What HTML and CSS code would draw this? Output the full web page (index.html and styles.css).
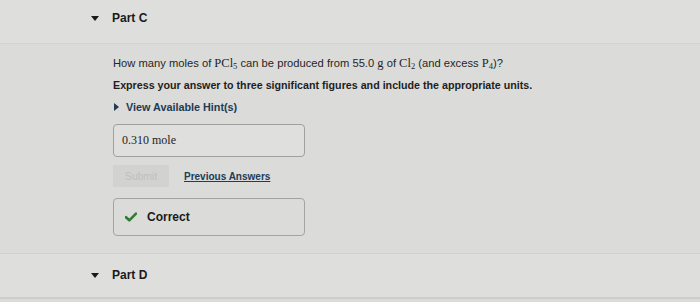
FILE: index.html
```html
<!DOCTYPE html>
<html>
<head>
<meta charset="utf-8">
<link rel="stylesheet" href="styles.css">
</head>
<body>
<div class="page">
  <div class="part-head">
    <span class="caret"></span>
    <span class="part-title">Part C</span>
  </div>
  <div class="part-body">
    <p class="question">How many moles of <span class="m">PCl<sub>5</sub></span> can be produced from 55.0 <span class="m">g</span> of <span class="m">Cl<sub>2</sub></span> (and excess <span class="m">P<sub>4</sub></span>)?</p>
    <p class="instr">Express your answer to three significant figures and include the appropriate units.</p>
    <div class="hint"><span class="hint-caret"></span><span>View Available Hint(s)</span></div>
    <div class="answer"><span class="m">0.310 mole</span></div>
    <div class="actions">
      <span class="submit">Submit</span>
      <a class="prev">Previous Answers</a>
    </div>
    <div class="correct">
      <svg class="check" width="12" height="10" viewBox="0 0 12 10"><path d="M1 5.2 L4.3 8.3 L11 1.6" fill="none" stroke="#2f7d32" stroke-width="2.6" stroke-linecap="round" stroke-linejoin="round"/></svg>
      <span>Correct</span>
    </div>
  </div>
  <div class="part-head part-d">
    <span class="caret"></span>
    <span class="part-title">Part D</span>
  </div>
</div>
</body>
</html>
```

FILE: styles.css
```css
html, body {
  margin: 0;
  padding: 0;
  background: #dbdbd9;
}
body {
  font-family: "Liberation Sans", Arial, sans-serif;
  color: #1e1e1e;
  width: 700px;
  height: 302px;
  overflow: hidden;
}
.page {
  display: flex;
  flex-direction: column;
}
.part-head {
  height: 44px;
  box-sizing: border-box;
  display: flex;
  align-items: flex-start;
  padding: 11px 0 0 91px;
  border-bottom: 1px solid #d2d2d0;
  background: #dededc;
}
.caret {
  width: 0;
  height: 0;
  border-left: 4.5px solid transparent;
  border-right: 4.5px solid transparent;
  border-top: 5px solid #1a1a1a;
  margin-right: 13px;
  margin-top: 5px;
}
.part-title {
  font-weight: bold;
  font-size: 12px;
  line-height: 14px;
  color: #1a1a1a;
}
.part-body {
  padding: 10px 0 0 113px;
  height: 209px;
  box-sizing: border-box;
}
.m {
  font-family: "Liberation Serif", "Times New Roman", serif;
  font-size: 12.5px;
}
.m sub {
  font-size: 8.5px;
  vertical-align: -2px;
  line-height: 0;
}
.question {
  margin: 0;
  font-size: 11.2px;
  line-height: 18px;
  color: #262626;
}
.instr {
  margin: 6px 0 0;
  font-size: 10.7px;
  font-weight: bold;
  line-height: 14px;
  color: #1e1e1e;
}
.hint {
  margin-top: 8px;
  display: flex;
  align-items: center;
  font-size: 10.8px;
  font-weight: bold;
  color: #223a52;
  height: 14px;
}
.hint-caret {
  width: 0;
  height: 0;
  border-top: 4px solid transparent;
  border-bottom: 4px solid transparent;
  border-left: 5px solid #223a52;
  margin-right: 7px;
  margin-left: 1px;
}
.answer {
  margin-top: 10px;
  width: 192px;
  height: 33px;
  box-sizing: border-box;
  border: 1px solid #a0a09e;
  border-radius: 4px;
  display: flex;
  align-items: center;
  padding-left: 8px;
  background: #dfdfdd;
}
.answer .m {
  font-size: 12px;
  color: #222;
}
.actions {
  margin-top: 8px;
  display: flex;
  align-items: center;
  height: 22px;
}
.submit {
  width: 56px;
  height: 22px;
  background: #d2d2d0;
  color: #c0c0be;
  font-size: 10.5px;
  display: flex;
  align-items: center;
  justify-content: center;
  border-radius: 1px;
}
.prev {
  margin-left: 15px;
  font-size: 10px;
  font-weight: bold;
  color: #213c58;
  text-decoration: underline;
}
.correct {
  margin-top: 11px;
  width: 192px;
  height: 38px;
  box-sizing: border-box;
  border: 1px solid #a3a3a1;
  border-radius: 4px;
  display: flex;
  align-items: center;
  padding-left: 11px;
  font-size: 12px;
  font-weight: bold;
  color: #1a1a1a;
}
.check {
  margin-right: 10px;
}
.part-d {
  height: 46px;
  border-top: 1px solid #d2d2d0;
  border-bottom: 2px solid #cdcdcb;
  padding-top: 14px;
}
```
